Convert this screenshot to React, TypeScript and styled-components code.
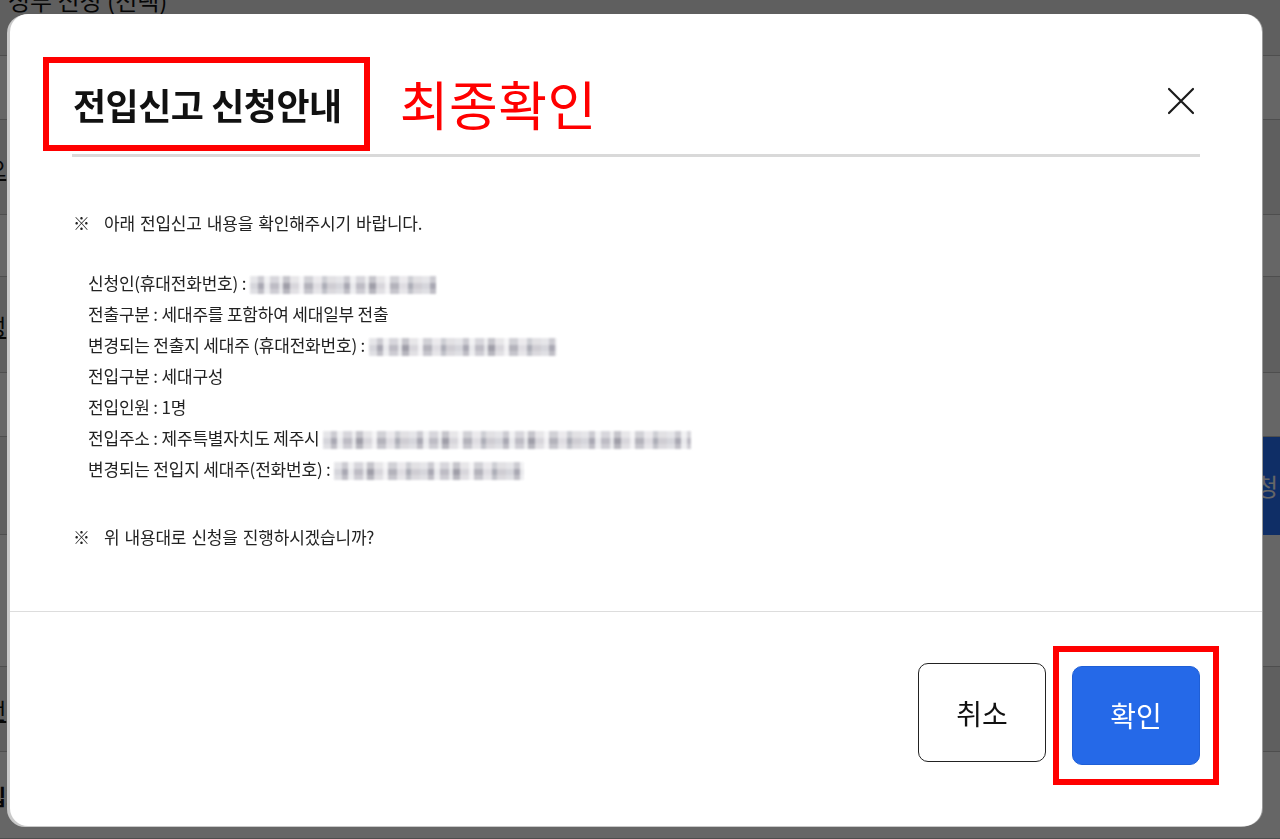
import React from 'react';
import styled, { createGlobalStyle } from 'styled-components';

const GlobalStyle = createGlobalStyle`
  html,
  body {
    margin: 0;
    padding: 0;
    height: 100%;
    overflow: hidden;
    background: #ffffff;
    font-family: 'Noto Sans CJK KR', 'Noto Sans', sans-serif;
  }
`;

/* ---------- page behind the dialog ---------- */

const Page = styled.div`
  width: 1280px;
  height: 839px;
  overflow: hidden;
  background: #ffffff;
`;

const PageTitle = styled.div`
  display: flex;
  align-items: flex-start;
  height: 56px;
  padding-left: 8px;
  background: #eeeeee;
  border-bottom: 1px solid #c4c4c4;
  box-sizing: border-box;
  font-size: 24px;
  line-height: 1;
  color: #111;

  span {
    margin-top: -12px;
  }
`;

const FormRow = styled.div<{ $h: number; $alt?: boolean }>`
  display: flex;
  align-items: center;
  justify-content: space-between;
  height: ${(p) => p.$h}px;
  box-sizing: border-box;
  border-bottom: 1px solid #c4c4c4;
  background: ${(p) => (p.$alt ? '#eeeeee' : '#ffffff')};
`;

const RowLabel = styled.span<{ $bold?: boolean }>`
  font-size: 22px;
  color: #111;
  margin-left: -14px;
  font-weight: ${(p) => (p.$bold ? 700 : 400)};
  text-decoration: ${(p) => (p.$bold ? 'none' : 'underline')};
`;

const ApplyButton = styled.button`
  width: 92px;
  height: 98px;
  margin-right: -22px;
  border: 0;
  background: #2673ff;
  color: #ffffff;
  font-family: inherit;
  font-size: 24px;
`;

const Backdrop = styled.div`
  position: fixed;
  inset: 0;
  background: rgba(0, 0, 0, 0.6);
`;

/* ---------- dialog ---------- */

const Dialog = styled.div`
  position: fixed;
  top: 14px;
  left: 10px;
  width: 1252px;
  height: 812px;
  display: flex;
  flex-direction: column;
  background: #ffffff;
  border-radius: 18px;
  box-shadow: -3px 1px 0 0 #c9c9c9, 1px 0 0 0 #9a9a9a;
  overflow: hidden;
`;

const Header = styled.div`
  display: flex;
  align-items: center;
  padding: 43px 66px 0 33px;
`;

const Marked = styled.div`
  border: 6px solid #ff0000;
`;

const TitleBox = styled(Marked)`
  padding: 20px 22px 20px 24px;
`;

const Title = styled.h2`
  margin: 0;
  font-size: 36px;
  line-height: 42px;
  font-weight: 700;
  color: #111111;
  letter-spacing: -0.5px;
`;

const Note = styled.span`
  margin-left: 30px;
  font-size: 53px;
  line-height: 1;
  color: #ff0000;
  letter-spacing: 0.5px;
  margin-top: -2px;
`;

const CloseButton = styled.button`
  margin-left: auto;
  width: 30px;
  height: 30px;
  padding: 0;
  border: 0;
  background: none;
  display: flex;
  align-items: center;
  justify-content: center;
  cursor: pointer;
  margin-top: -6px;
`;

const HeaderLine = styled.hr`
  margin: 3px 62px 0 62px;
  border: 0;
  height: 3px;
  background: #d9d9d9;
`;

const Body = styled.div`
  flex: 1;
  padding: 50px 63px 0 63px;
  font-size: 17px;
  line-height: 31px;
  color: #222222;
  letter-spacing: -0.2px;
`;

const Notice = styled.p<{ $gap: number }>`
  margin: 0 0 ${(p) => p.$gap}px 0;
  word-spacing: 1.5px;

  b {
    display: inline-block;
    font-weight: 400;
    width: 31px;
  }
`;

const Details = styled.ul`
  list-style: none;
  margin: 0 0 37px 15px;
  padding: 0;
`;

const Masked = styled.span`
  display: inline-block;
  height: 18px;
  vertical-align: -4px;
  filter: blur(0.9px);
  opacity: 0.85;
  background:
    linear-gradient(180deg, rgba(255, 255, 255, 0.4) 0 40%, rgba(255, 255, 255, 0) 40% 75%, rgba(255, 255, 255, 0.25) 75%),
    repeating-linear-gradient(
      90deg,
      #cfcfd6 0 8px,
      #9b9aa6 8px 14px,
      #e6e6ea 14px 20px,
      #b3b1bb 20px 29px,
      #e0e0e4 29px 33px,
      #8f8e9a 33px 40px,
      #d2d0d6 40px 49px,
      #efeef1 49px 54px,
      #a7a6b0 54px 63px,
      #dad8de 63px 72px,
      #9fa0ab 72px 77px,
      #c7c5cc 77px 86px
    );
`;

const Footer = styled.div`
  display: flex;
  align-items: center;
  justify-content: flex-end;
  gap: 7px;
  height: 215px;
  box-sizing: border-box;
  padding: 0 43px 8px 0;
  border-top: 1px solid #dddddd;
`;

const ActionBox = styled(Marked)`
  padding: 14px 13px;
`;

const ActionButton = styled.button<{ $primary?: boolean }>`
  width: 128px;
  height: 99px;
  border-radius: 10px;
  border: 1px solid ${(p) => (p.$primary ? '#1f5fd6' : '#222222')};
  background: ${(p) => (p.$primary ? '#2569e8' : '#ffffff')};
  color: ${(p) => (p.$primary ? '#ffffff' : '#111111')};
  font-family: inherit;
  font-size: 28px;
  cursor: pointer;
  margin-bottom: ${(p) => (p.$primary ? 0 : 5)}px;
`;

const details: { label: string; value?: string; masked?: number }[] = [
  { label: '신청인(휴대전화번호) : ', masked: 186 },
  { label: '전출구분 : ', value: '세대주를 포함하여 세대일부 전출' },
  { label: '변경되는 전출지 세대주 (휴대전화번호) : ', masked: 188 },
  { label: '전입구분 : ', value: '세대구성' },
  { label: '전입인원 : ', value: '1명' },
  { label: '전입주소 : ', value: '제주특별자치도 제주시 ', masked: 368 },
  { label: '변경되는 전입지 세대주(전화번호) : ', masked: 190 },
];

export default function App() {
  return (
    <>
      <GlobalStyle />
      <Page>
        <PageTitle>
          <span>성부 신청 (선택)</span>
        </PageTitle>
        <FormRow $h={64} />
        <FormRow $h={95} $alt>
          <RowLabel>으</RowLabel>
        </FormRow>
        <FormRow $h={62} />
        <FormRow $h={96} $alt>
          <RowLabel>성</RowLabel>
        </FormRow>
        <FormRow $h={64} />
        <FormRow $h={98} $alt>
          <span />
          <ApplyButton>신청</ApplyButton>
        </FormRow>
        <FormRow $h={132} />
        <FormRow $h={85} $alt>
          <RowLabel>번</RowLabel>
        </FormRow>
        <FormRow $h={87}>
          <RowLabel $bold>입2</RowLabel>
        </FormRow>
      </Page>
      <Backdrop />

      <Dialog role="dialog" aria-modal="true">
        <Header>
          <TitleBox>
            <Title>전입신고 신청안내</Title>
          </TitleBox>
          <Note>최종확인</Note>
          <CloseButton aria-label="닫기">
            <svg width="28" height="28" viewBox="0 0 28 28" fill="none">
              <path
                d="M2 2 L26 26 M26 2 L2 26"
                stroke="#1a1a1a"
                strokeWidth="2.2"
                strokeLinecap="round"
              />
            </svg>
          </CloseButton>
        </Header>
        <HeaderLine />

        <Body>
          <Notice $gap={29}>
            <b>※</b>아래 전입신고 내용을 확인해주시기 바랍니다.
          </Notice>
          <Details>
            {details.map((d) => (
              <li key={d.label}>
                {d.label}
                {d.value}
                {d.masked && <Masked style={{ width: d.masked }} />}
              </li>
            ))}
          </Details>
          <Notice $gap={0}>
            <b>※</b>위 내용대로 신청을 진행하시겠습니까?
          </Notice>
        </Body>

        <Footer>
          <ActionButton>취소</ActionButton>
          <ActionBox>
            <ActionButton $primary>확인</ActionButton>
          </ActionBox>
        </Footer>
      </Dialog>
    </>
  );
}
